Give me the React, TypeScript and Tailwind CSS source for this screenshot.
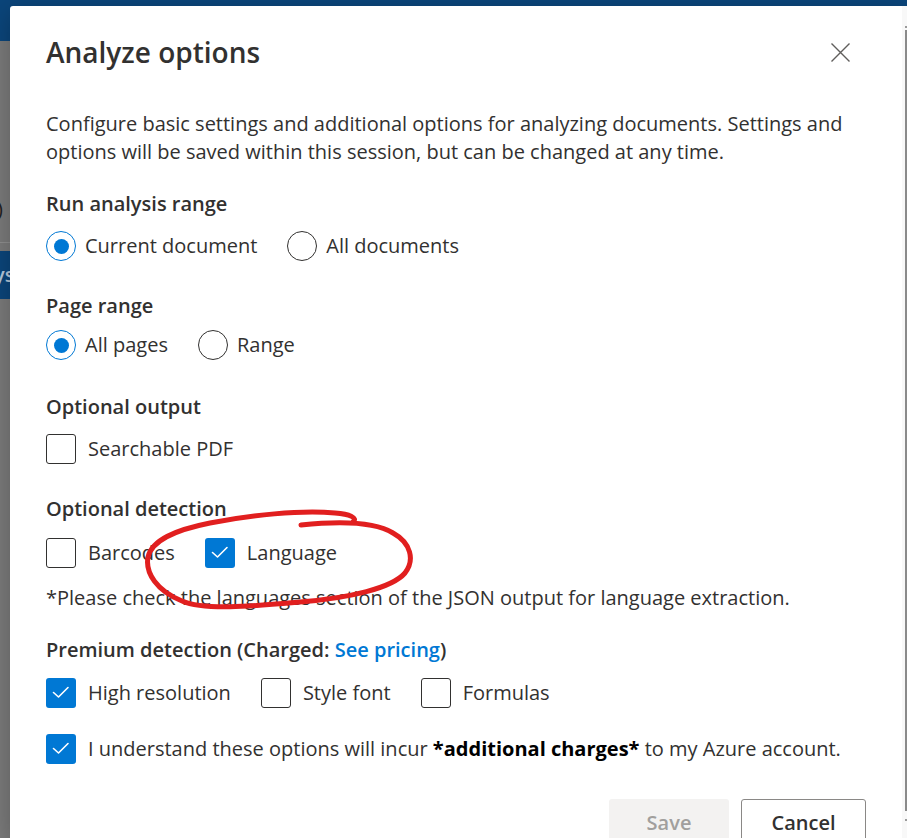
import React from 'react';

const Radio = ({ checked, label }: { checked?: boolean; label: string }) => (
    <label className="flex items-center gap-[9px] h-[30px]">
        {checked ? (
            <span className="w-[30px] h-[30px] rounded-full border-[1.5px] border-[#0078d4] flex items-center justify-center">
                <span className="w-[15px] h-[15px] rounded-full bg-[#0078d4]"></span>
            </span>
        ) : (
            <span className="w-[30px] h-[30px] rounded-full border-[1.5px] border-[#323130]"></span>
        )}
        <span>{label}</span>
    </label>
);

const Checkbox = ({ checked, children }: { checked?: boolean; children: React.ReactNode }) => (
    <label className="flex items-center gap-[12px] min-h-[30px]">
        {checked ? (
            <span className="w-[30px] h-[30px] shrink-0 rounded-[3px] bg-[#0078d4] flex items-center justify-center">
                <svg width="30" height="30" viewBox="0 0 30 30" fill="none">
                    <path d="M7.5 14.5 L12.5 19 L22 9.5" stroke="white" strokeWidth="1.6" strokeLinecap="round" strokeLinejoin="round" />
                </svg>
            </span>
        ) : (
            <span className="w-[30px] h-[30px] shrink-0 rounded-[3px] border-[1.5px] border-[#323130]"></span>
        )}
        <span>{children}</span>
    </label>
);

export default function App() {
    return (
        <div className="relative w-[907px] h-[838px] overflow-hidden bg-[#7a7a7a] font-['Open_Sans','Noto_Sans',sans-serif]">
            {/* dimmed page behind the dialog */}
            <div className="h-[41px] bg-[#0b457a]"></div>
            <div className="h-[162px] pt-[154px] text-[20px] text-[#202020] leading-[28px]">
                <span className="-ml-[3px]">)</span>
            </div>
            <div className="h-[40px] border-b border-[#8e8e8e]"></div>
            <div className="mt-[8px] h-[48px] bg-[#0b457a] flex items-center text-[20px] font-semibold text-[#b5c8da]">
                <span className="-ml-[6px]">ys</span>
            </div>

            {/* dialog */}
            <div className="absolute left-[10px] top-[6px] w-[897px] h-[832px] bg-white rounded-tl-[3px] shadow-[0_6px_24px_rgba(0,0,0,0.25)] flex text-[#323130] text-[20px] leading-[28px]">
                <div className="flex-1 px-[36px] pt-[26px]">
                    <div className="flex items-center justify-between">
                        <h1 className="text-[28px] leading-[40px] font-semibold">Analyze options</h1>
                        <button className="w-[30px] h-[30px] flex items-center justify-center mr-[11px] text-[#605e5c]">
                            <svg width="19" height="19" viewBox="0 0 19 19" fill="none">
                                <path d="M0.5 0.5 L18.5 18.5 M18.5 0.5 L0.5 18.5" stroke="currentColor" strokeWidth="1.4" />
                            </svg>
                        </button>
                    </div>

                    <p className="mt-[38px]">
                        Configure basic settings and additional options for analyzing documents. Settings and options will be saved within this session, but can be changed at any time.
                    </p>

                    <h2 className="mt-[24px] font-semibold">Run analysis range</h2>
                    <div className="mt-[13px] flex gap-[30px]">
                        <Radio checked label="Current document" />
                        <Radio label="All documents" />
                    </div>

                    <h2 className="mt-[31px] font-semibold">Page range</h2>
                    <div className="mt-[10px] flex gap-[30px]">
                        <Radio checked label="All pages" />
                        <Radio label="Range" />
                    </div>

                    <h2 className="mt-[33px] font-semibold">Optional output</h2>
                    <div className="mt-[13px] flex gap-[30px]">
                        <Checkbox>Searchable PDF</Checkbox>
                    </div>

                    <h2 className="mt-[31px] font-semibold">Optional detection</h2>
                    <div className="mt-[15px] flex gap-[30px]">
                        <Checkbox>Barcodes</Checkbox>
                        <Checkbox checked>Language</Checkbox>
                    </div>
                    <p className="mt-[16px]">*Please check the languages section of the JSON output for language extraction.</p>

                    <h2 className="mt-[24px] font-semibold">
                        Premium detection (Charged: <a className="text-[#0078d4]">See pricing</a>)
                    </h2>
                    <div className="mt-[14px] flex gap-[30px]">
                        <Checkbox checked>High resolution</Checkbox>
                        <Checkbox>Style font</Checkbox>
                        <Checkbox>Formulas</Checkbox>
                    </div>

                    <div className="mt-[26px]">
                        <Checkbox checked>
                            I understand these options will incur <b className="font-bold text-black">*additional charges*</b> to my Azure account.
                        </Checkbox>
                    </div>

                    <div className="mt-[35px] flex justify-end gap-[12px]">
                        <button className="w-[120px] h-[48px] rounded-[3px] bg-[#f3f2f1] text-[#a19f9d] font-semibold">Save</button>
                        <button className="w-[125px] h-[48px] rounded-[3px] border-[1.5px] border-[#8a8886] font-semibold">Cancel</button>
                    </div>
                </div>

                {/* scrollbar */}
                <div className="w-[5px] bg-[#f8f8f8] flex flex-col items-end pt-[20px] pb-[17px]">
                    <div className="w-[2px] h-[2px] bg-[#9a9a9a]"></div>
                    <div className="mt-[2px] flex-1 w-[2px] bg-[#8a8a8a]"></div>
                    <div className="mt-[8px] w-[2px] h-[2px] bg-[#9a9a9a]"></div>
                </div>
            </div>

            {/* red pen annotation */}
            <svg className="absolute left-0 top-0 pointer-events-none" width="907" height="838" viewBox="0 0 907 838" fill="none">
                <path
                    d="M301 525 C 330 522, 372 520, 393 533 C 411 543, 415 560, 405 573 C 392 588, 350 598, 300 602 C 255 606, 205 611, 182 601 C 157 591, 145 573, 148 557 C 152 540, 175 530, 210 523 C 250 515, 300 510, 335 513 C 350 514, 358 518, 353 522"
                    stroke="#e11f1f"
                    strokeWidth="5"
                    strokeLinecap="round"
                    strokeLinejoin="round"
                />
            </svg>
        </div>
    );
}
